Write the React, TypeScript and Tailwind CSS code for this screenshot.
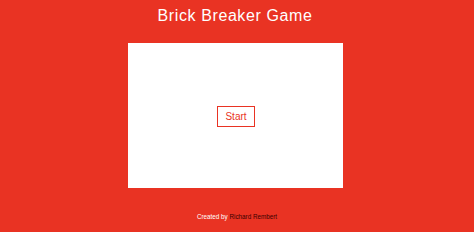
import React from 'react';

export default function App() {
  return (
    <div className="h-[232px] w-full bg-[#e93323] flex flex-col items-center font-['Liberation_Sans',Arial,sans-serif]">
      <h1 className="mt-[6px] h-[20px] text-[16px] leading-[20px] tracking-[0.6px] text-white ml-[-4px]">Brick Breaker Game</h1>

      {/* Game board */}
      <div className="mt-[17px] w-[215px] h-[145px] bg-white flex items-center justify-center ml-[-3px]">
        <button className="w-[38px] h-[21px] border border-[#e93323] text-[#e93323] text-[10px] leading-none mt-[2px] ml-[1px]">
          Start
        </button>
      </div>

      <p className="mt-[24px] text-[6.3px] leading-[9px] text-white">
        Created by <span className="text-[#3a0000]">Richard Rembert</span>
      </p>
    </div>
  );
}
